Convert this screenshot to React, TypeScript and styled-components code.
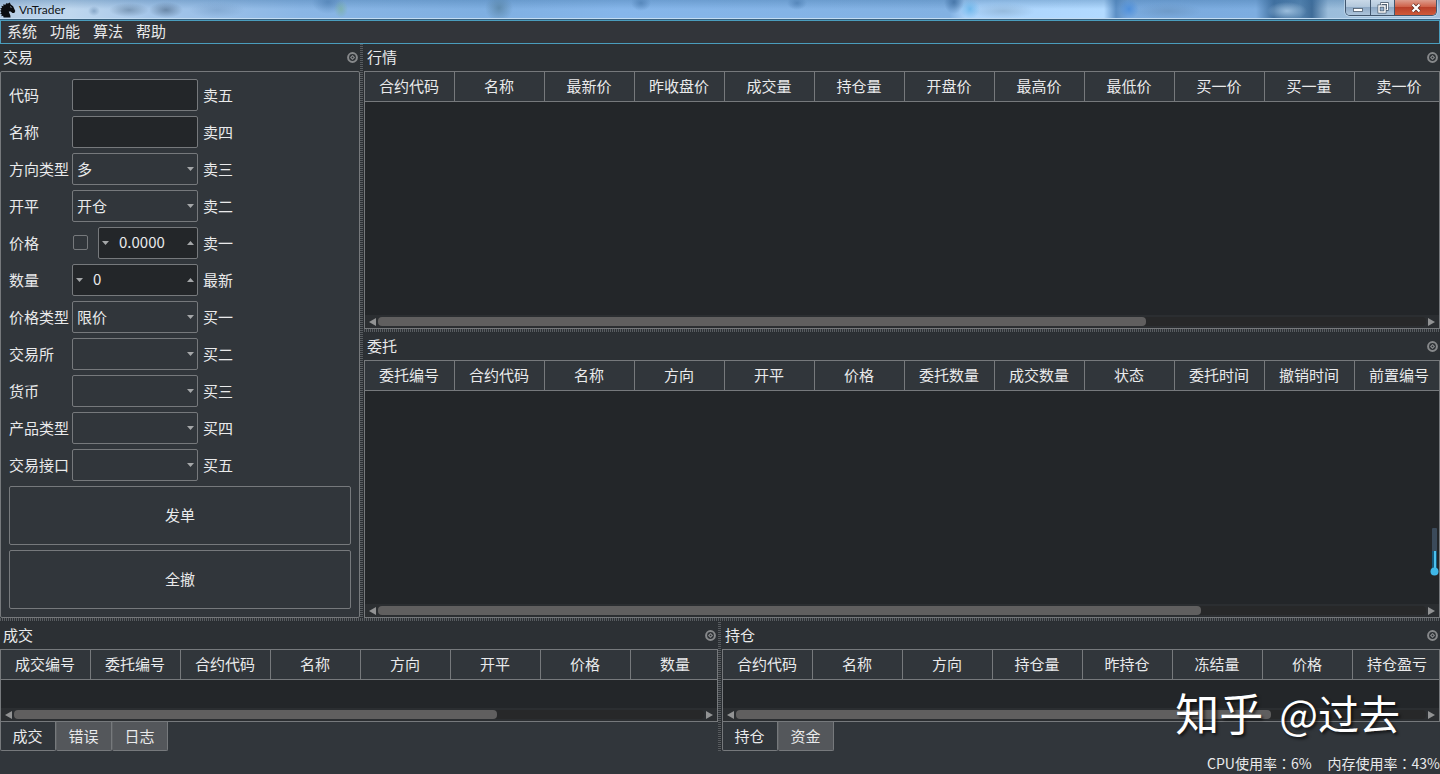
import React from "react";
import styled, { createGlobalStyle, css } from "styled-components";

const color = {
  base: "#31363b",
  title: "#2c3034",
  field: "#232629",
  line: "#76797c",
  text: "#e9eaeb",
  thumb: "#605f5f",
  accent: "#4a9dbd",
};

const GlobalStyle = createGlobalStyle`
  *, *::before, *::after { box-sizing: border-box; }
  body {
    margin: 0;
    background: ${color.base};
    color: ${color.text};
    font: 15px/20px "Noto Sans CJK SC", sans-serif;
  }
  button, input, select { font: inherit; color: inherit; margin: 0; }
`;

const Window = styled.div`
  position: relative;
  display: flex;
  flex-direction: column;
  min-height: 100vh;
  overflow: hidden;
`;

/* ---------- window frame ---------- */

const TitleBar = styled.header`
  display: flex;
  align-items: flex-start;
  justify-content: space-between;
  height: 20px;
  border-bottom: 1px solid #39617f;
  box-shadow: inset 0 -1px 0 #c3dcf2;
  background:
    radial-gradient(ellipse 20px 7px at 129px 10px, #5a789699, transparent),
    radial-gradient(ellipse 6px 5px at 94px 11px, #6f92b6aa, transparent),
    radial-gradient(ellipse 17px 8px at 166px 10px, #4e6a88aa, transparent),
    radial-gradient(ellipse 28px 8px at 217px 10px, #6c93bd77, transparent),
    radial-gradient(ellipse 7px 9px at 341px 9px, #79b09aaa, transparent),
    radial-gradient(ellipse 16px 12px at 328px 2px, #4c7db1aa, transparent),
    radial-gradient(ellipse 14px 14px at 499px 8px, #55809fbb, transparent),
    radial-gradient(ellipse 10px 8px at 641px 3px, #4c7db1bb, transparent),
    radial-gradient(ellipse 10px 7px at 797px 3px, #4c7db1bb, transparent),
    radial-gradient(ellipse 10px 12px at 954px 2px, #3d6c9fcc, transparent),
    radial-gradient(ellipse 10px 10px at 970px 9px, #63b2e8cc, transparent),
    radial-gradient(ellipse 32px 8px at 1003px 11px, #86a9c999, transparent),
    radial-gradient(ellipse 10px 10px at 1129px 9px, #3f86dabb, transparent),
    radial-gradient(ellipse 34px 8px at 1168px 11px, #6690bb99, transparent),
    radial-gradient(ellipse 20px 9px at 1287px 11px, #a7c8e5dd, transparent),
    linear-gradient(to bottom, #3a6ea055, transparent 9px),
    linear-gradient(to right,
      #b5cce4 0, #bfd7ee 70px, #a5c6e9 150px, #8ab6e5 300px, #7fafe1 480px,
      #86b6ea 620px, #82b1e2 950px, #abd3fb 966px, #b2daff 1104px,
      #5c8fc5 1116px, #7aaade 1128px, #7dade0 1256px, #41709f 1274px,
      #5684af 1300px, #3f6c98 1312px, #9bbddb 1328px, #a4c2de 100%);
`;

const AppName = styled.h1`
  display: flex;
  align-items: center;
  gap: 3px;
  margin: 0;
  color: #101418;
  font: 12px/19px "Lato", sans-serif;
`;

const CaptionButtons = styled.div`
  display: flex;
  margin-right: 3px;
  border: 1px solid #41566e;
  border-top: 0;
  border-radius: 0 0 5px 5px;
  overflow: hidden;
  box-shadow: 0 0 0 1px #d6e6f488;
`;

const CaptionButton = styled.button<{ $close?: boolean }>`
  display: flex;
  align-items: center;
  justify-content: center;
  width: ${(p) => (p.$close ? 42 : 24)}px;
  height: 15px;
  padding: 0;
  border: 0;
  background: ${(p) =>
    p.$close
      ? "linear-gradient(#dd9d8e, #cf6149 45%, #b9402a 50%, #cf5a3a)"
      : "linear-gradient(#c9d9e8, #b3c8dc 45%, #8faac6 50%, #adc5dc)"};
  & + & { border-left: 1px solid #41566e; }
`;

const MenuBar = styled.nav`
  display: flex;
  align-items: center;
  height: 24px;
  padding-bottom: 2px;
  border: 1px solid ${color.accent};
  background: #32353a;
`;

const MenuItem = styled.button`
  padding: 0 7px 0 6px;
  border: 0;
  background: none;
`;

/* ---------- docks ---------- */

const hatch = css<{ $vertical?: boolean }>`
  background: repeating-linear-gradient(
    ${(p) => (p.$vertical ? "to bottom" : "to right")},
    #585c60 0 1px, #2b2f33 1px 2px
  );
`;

const Splitter = styled.div<{ $vertical?: boolean }>`
  flex: none;
  ${(p) => (p.$vertical ? "width: 4px;" : "height: 4px;")}
  ${hatch}
  border: 1px solid #2b2f33;
  border-width: ${(p) => (p.$vertical ? "0 1px 0 0" : "0 0 1px")};
`;

const Row = styled.div<{ $grow?: boolean }>`
  display: flex;
  flex: ${(p) => (p.$grow ? "1" : "none")};
`;

const Column = styled.div`
  display: flex;
  flex: 1;
  flex-direction: column;
  min-width: 0;
`;

const Dock = styled.section<{ $width?: number }>`
  display: flex;
  flex: ${(p) => (p.$width ? `0 0 ${p.$width}px` : "1 1 0")};
  flex-direction: column;
  min-width: 0;
`;

const DockTitle = styled.div`
  display: flex;
  align-items: center;
  justify-content: space-between;
  height: 27px;
  padding: 0 2px 0 3px;
  background: ${color.title};
  h2 { margin: 0; padding-bottom: 1px; font: inherit; }
`;

const DockClose = styled.button`
  display: flex;
  padding: 0;
  border: 0;
  background: none;
`;

/* ---------- order form ---------- */

const Form = styled.form`
  display: flex;
  flex: 1;
  flex-direction: column;
  gap: 5px;
  padding: 7px 8px 8px;
  border: 1px solid ${color.line};
  border-radius: 2px;
`;

const Fields = styled.div`
  display: grid;
  grid-template-columns: 58px 126px 1fr;
  grid-auto-rows: 32px;
  gap: 5px;
  align-items: center;
  white-space: nowrap;
`;

const Quote = styled.span``;

const FieldLabel = styled.label``;

const boxed = css`
  height: 32px;
  border: 1px solid ${color.line};
  border-radius: 2px;
`;

const TextBox = styled.input`
  ${boxed}
  width: 100%;
  padding: 0 5px;
  background: ${color.field};
`;

const SelectBox = styled.div`
  display: grid;
  align-items: center;
  select, svg { grid-area: 1 / 1; }
  svg { justify-self: end; margin-right: 4px; pointer-events: none; }
`;

const Select = styled.select`
  ${boxed}
  appearance: none;
  width: 100%;
  padding: 0 16px 0 4px;
  background: ${color.base};
`;

const PriceCell = styled.div`
  display: flex;
  align-items: center;
  gap: 10px;
`;

const Tick = styled.input`
  appearance: none;
  flex: none;
  width: 15px;
  height: 15px;
  margin: 0 0 2px 1px;
  border: 1px solid ${color.line};
  border-radius: 2px;
`;

const Spin = styled.div`
  ${boxed}
  display: flex;
  flex: 1;
  min-width: 0;
  align-items: center;
  background: ${color.field};
`;

const SpinButton = styled.button`
  display: flex;
  padding: 0 3px;
  border: 0;
  background: none;
`;

const SpinInput = styled.input`
  flex: 1;
  min-width: 0;
  padding: 0 0 2px 7px;
  border: 0;
  background: none;
`;

const ActionButton = styled.button`
  flex: 1;
  min-height: 56px;
  padding-bottom: 2px;
  border: 1px solid ${color.line};
  border-radius: 2px;
  background: ${color.base};
`;

/* ---------- tables ---------- */

const Frame = styled.div`
  display: flex;
  flex: 1;
  flex-direction: column;
  min-height: 73px;
  border: 1px solid ${color.line};
  background: ${color.field};
  overflow: hidden;
`;

const TableArea = styled.div`
  position: relative;
  flex: 1;
  overflow: hidden;
`;

const Table = styled.table`
  width: max-content;
  table-layout: fixed;
  border-collapse: separate;
  border-spacing: 0;
`;

const HeadCell = styled.th`
  width: 90px;
  min-width: 90px;
  height: 30px;
  padding: 0 1px 2px 0;
  border: solid ${color.line};
  border-width: 0 1px 1px 0;
  background: ${color.base};
  font-weight: 400;
`;

const ScrollBar = styled.div`
  display: flex;
  align-items: center;
  gap: 2px;
  height: 13px;
  padding: 0 4px;
  background: #2b2e31;
`;

const ScrollArrow = styled.button`
  display: flex;
  padding: 0;
  border: 0;
  background: none;
`;

const Track = styled.div`
  flex: 1;
  height: 9px;
  border-radius: 4px;
  background: #272829;
`;

const Thumb = styled.div`
  height: 9px;
  border-radius: 4px;
  background: ${color.thumb};
`;

const Gauge = styled.svg`
  position: absolute;
  right: 0;
  bottom: 27px;
`;

const Tabs = styled.div`
  display: flex;
  height: 29px;
`;

const Tab = styled.button<{ $active?: boolean }>`
  width: 56px;
  padding: 0 1px 0 0;
  border: 1px solid ${color.line};
  border-top: 0;
  border-left-color: ${(p) => (p.$active ? color.line : "#5f6265")};
  border-radius: 0 0 2px 2px;
  background: ${(p) => (p.$active ? color.base : "#54575b")};
`;

const StatusBar = styled.footer`
  display: flex;
  justify-content: flex-end;
  gap: 16px;
  height: 23px;
  padding-top: 2px;
  font-family: "Noto Sans CJK JP", sans-serif;
  font-size: 14px;
`;

const Watermark = styled.div`
  position: absolute;
  right: 40px;
  bottom: 38px;
  display: flex;
  align-items: center;
  gap: 16px;
  color: #fff;
  font-size: 41px;
  line-height: 48px;
  text-shadow: 2px 2px 3px #000a;
  pointer-events: none;
  strong { font-size: 44px; font-weight: 400; }
`;

/* ---------- drawings ---------- */

const HorseIcon = () => (
  <svg width="16" height="17" viewBox="0 0 16 17" aria-hidden="true">
    <path
      fill="#0b0d10"
      d="M8 2.600 9.800 1.400l.9 2 2.400 1.900 2.200 4.600-1 2-1.900.2-1.700-1.700-1.900.2c.1 1.900 2 2.900 1.700 5.900H3.600l-.5-1.800-1.800.6.500-2L.2 13l1.200-1.700L0 9.800l1.500-.9L.2 7.200l1.800-.3-.6-2.100 1.900.4.200-2.100 1.700.8 1-1.600z"
    />
    <path d="M10 5.600l1.600.9" stroke="#9ab" strokeWidth=".8" />
  </svg>
);

const CloseIcon = () => (
  <svg width="11" height="11" viewBox="0 0 11 11" aria-hidden="true">
    <circle cx="5.500" cy="5.500" r="4.400" fill="none" stroke="#87898b" strokeWidth="2" />
    <path d="M5.500 3.700l1.800 1.800-1.800 1.800-1.800-1.800z" fill="none" stroke="#87898b" strokeWidth="1.100" />
  </svg>
);

const arrows = {
  down: "M0 1h7l-3.500 4z",
  up: "M0 5h7L3.500 1z",
};

const Arrow = ({ dir }: { dir: keyof typeof arrows }) => (
  <svg width="7" height="6" viewBox="0 0 7 6" aria-hidden="true">
    <path d={arrows[dir]} fill="#a5a7a9" />
  </svg>
);

const SideArrow = ({ right }: { right?: boolean }) => (
  <svg width="7" height="8" viewBox="0 0 7 8" aria-hidden="true">
    <path d={right ? "M0 0l7 4-7 4z" : "M7 0L0 4l7 4z"} fill="#929394" />
  </svg>
);

/* ---------- parts ---------- */

const Title = ({ name }: { name: string }) => (
  <DockTitle>
    <h2>{name}</h2>
    <DockClose type="button" aria-label={`关闭${name}`}>
      <CloseIcon />
    </DockClose>
  </DockTitle>
);

type TableDockProps = {
  name: string;
  columns: string[];
  /** visible share of the table's full width */
  visible: number;
  tabs?: string[];
  children?: React.ReactNode;
};

const TableDock = ({ name, columns, visible, tabs, children }: TableDockProps) => (
  <Dock>
    <Title name={name} />
    <Frame>
      <TableArea>
        <Table>
          <thead>
            <tr>
              {columns.map((c) => (
                <HeadCell key={c} scope="col">{c}</HeadCell>
              ))}
            </tr>
          </thead>
        </Table>
        {children}
      </TableArea>
      <ScrollBar>
        <ScrollArrow type="button" aria-label="向左"><SideArrow /></ScrollArrow>
        <Track><Thumb style={{ width: `${visible * 100}%` }} /></Track>
        <ScrollArrow type="button" aria-label="向右"><SideArrow right /></ScrollArrow>
      </ScrollBar>
    </Frame>
    {tabs && (
      <Tabs role="tablist">
        {tabs.map((t, i) => (
          <Tab key={t} type="button" role="tab" aria-selected={i === 0} $active={i === 0}>{t}</Tab>
        ))}
      </Tabs>
    )}
  </Dock>
);

const SpinBox = ({ id, value }: { id: string; value: string }) => (
  <Spin>
    <SpinButton type="button" aria-label="减少"><Arrow dir="down" /></SpinButton>
    <SpinInput id={id} defaultValue={value} />
    <SpinButton type="button" aria-label="增加"><Arrow dir="up" /></SpinButton>
  </Spin>
);

type Field = {
  label: string;
  quote: string;
  kind: "text" | "select" | "price" | "volume";
  value?: string;
};

const fields: Field[] = [
  { label: "代码", quote: "卖五", kind: "text" },
  { label: "名称", quote: "卖四", kind: "text" },
  { label: "方向类型", quote: "卖三", kind: "select", value: "多" },
  { label: "开平", quote: "卖二", kind: "select", value: "开仓" },
  { label: "价格", quote: "卖一", kind: "price", value: "0.0000" },
  { label: "数量", quote: "最新", kind: "volume", value: "0" },
  { label: "价格类型", quote: "买一", kind: "select", value: "限价" },
  { label: "交易所", quote: "买二", kind: "select" },
  { label: "货币", quote: "买三", kind: "select" },
  { label: "产品类型", quote: "买四", kind: "select" },
  { label: "交易接口", quote: "买五", kind: "select" },
];

const Control = ({ field, id }: { field: Field; id: string }) => {
  const value = field.value ?? "";
  switch (field.kind) {
    case "text":
      return <TextBox id={id} type="text" />;
    case "select":
      return (
        <SelectBox>
          <Select id={id} defaultValue={value}>
            <option>{value}</option>
          </Select>
          <Arrow dir="down" />
        </SelectBox>
      );
    case "price":
      return (
        <PriceCell>
          <Tick type="checkbox" aria-label="固定价格" />
          <SpinBox id={id} value={value} />
        </PriceCell>
      );
    default:
      return <SpinBox id={id} value={value} />;
  }
};

const quoteColumns = ["合约代码", "名称", "最新价", "昨收盘价", "成交量", "持仓量", "开盘价", "最高价", "最低价", "买一价", "买一量", "卖一价"];
const orderColumns = ["委托编号", "合约代码", "名称", "方向", "开平", "价格", "委托数量", "成交数量", "状态", "委托时间", "撤销时间", "前置编号"];
const tradeColumns = ["成交编号", "委托编号", "合约代码", "名称", "方向", "开平", "价格", "数量"];
const positionColumns = ["合约代码", "名称", "方向", "持仓量", "昨持仓", "冻结量", "价格", "持仓盈亏"];

export default function App() {
  return (
    <Window>
      <GlobalStyle />
      <TitleBar>
        <AppName><HorseIcon />VnTrader</AppName>
        <CaptionButtons>
          <CaptionButton type="button" aria-label="最小化">
            <svg width="12" height="12" viewBox="0 0 12 12">
              <rect x="1.500" y="6.500" width="9" height="3" fill="#fff" stroke="#4a5a6b" strokeWidth=".8" />
            </svg>
          </CaptionButton>
          <CaptionButton type="button" aria-label="还原">
            <svg width="12" height="12" viewBox="0 0 12 12" fill="none">
              <path d="M4.500 3.500v-2h6v6h-2" stroke="#3f4f60" strokeWidth="2.400" />
              <path d="M4.500 3.500v-2h6v6h-2" stroke="#fff" strokeWidth="1.200" />
              <rect x="2" y="4" width="6" height="6" stroke="#3f4f60" strokeWidth="2.800" />
              <rect x="2" y="4" width="6" height="6" stroke="#fff" strokeWidth="1.500" />
            </svg>
          </CaptionButton>
          <CaptionButton type="button" aria-label="关闭" $close>
            <svg width="12" height="12" viewBox="0 0 12 12">
              <path d="M2.500 2.500l7 7M9.500 2.500l-7 7" stroke="#5d2a22" strokeWidth="3.800" />
              <path d="M2.500 2.500l7 7M9.500 2.500l-7 7" stroke="#fff" strokeWidth="2.300" />
            </svg>
          </CaptionButton>
        </CaptionButtons>
      </TitleBar>
      <MenuBar>
        {["系统", "功能", "算法", "帮助"].map((m) => (
          <MenuItem key={m} type="button">{m}</MenuItem>
        ))}
      </MenuBar>

      <Row $grow>
        <Dock $width={360}>
          <Title name="交易" />
          <Form onSubmit={(e) => e.preventDefault()}>
            <Fields>
              {fields.map((f, i) => (
                <React.Fragment key={f.label}>
                  <FieldLabel htmlFor={`field-${i}`}>{f.label}</FieldLabel>
                  <Control field={f} id={`field-${i}`} />
                  <Quote>{f.quote}</Quote>
                </React.Fragment>
              ))}
            </Fields>
            <ActionButton type="submit">发单</ActionButton>
            <ActionButton type="button">全撤</ActionButton>
          </Form>
        </Dock>
        <Splitter $vertical />
        <Column>
          <TableDock name="行情" columns={quoteColumns} visible={0.733} />
          <Splitter />
          <TableDock name="委托" columns={orderColumns} visible={0.785}>
            <Gauge width="9" height="50" viewBox="0 0 9 50" aria-hidden="true">
              <rect x="2" y="1" width="5" height="44" rx="1" fill="#3b4a5a" />
              <rect x="2" y="24" width="5" height="20" fill="#17587a" />
              <rect x="4" y="24" width="2" height="20" fill="#4cc0ee" />
              <circle cx="4.500" cy="44.500" r="4" fill="#3fb7e8" />
            </Gauge>
          </TableDock>
        </Column>
      </Row>
      <Splitter />
      <Row>
        <TableDock name="成交" columns={tradeColumns} visible={0.7} tabs={["成交", "错误", "日志"]} />
        <Splitter $vertical />
        <TableDock name="持仓" columns={positionColumns} visible={0.775} tabs={["持仓", "资金"]} />
      </Row>
      <StatusBar>
        <span>CPU使用率：6%</span>
        <span>内存使用率：43%</span>
      </StatusBar>
      <Watermark><strong>知乎</strong><span>@过去</span></Watermark>
    </Window>
  );
}
